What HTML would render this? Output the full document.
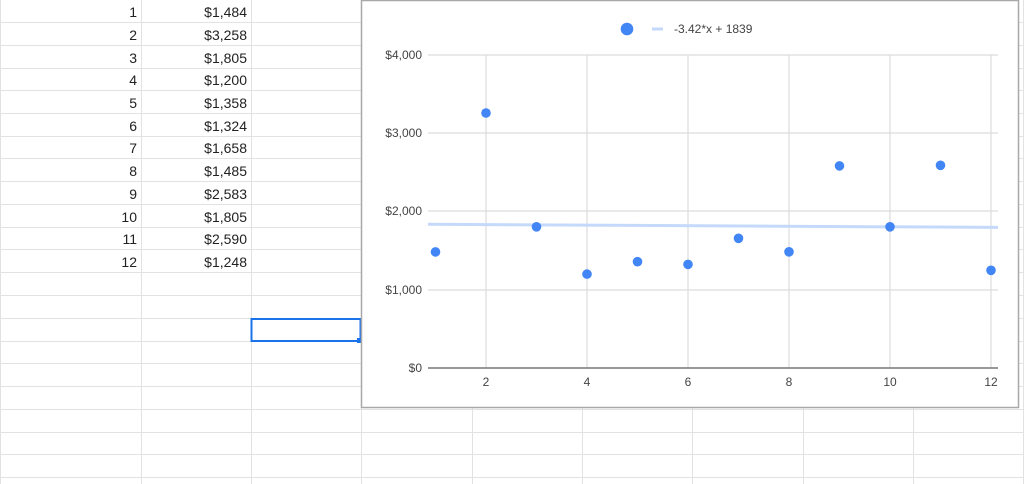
<!DOCTYPE html>
<html><head><meta charset="utf-8"><style>
html,body{margin:0;padding:0;background:#fff;width:1024px;height:484px;overflow:hidden}
svg{display:block}
text{font-family:"Liberation Sans",Arial,sans-serif}
</style></head><body>
<svg width="1024" height="484" viewBox="0 0 1024 484" xmlns="http://www.w3.org/2000/svg">
<g stroke="#e2e2e2" stroke-width="1">
<line x1="0.5" y1="0" x2="0.5" y2="484"/>
<line x1="141.5" y1="0" x2="141.5" y2="484"/>
<line x1="251.5" y1="0" x2="251.5" y2="484"/>
<line x1="361.5" y1="0" x2="361.5" y2="484"/>
<line x1="472.5" y1="0" x2="472.5" y2="484"/>
<line x1="582.5" y1="0" x2="582.5" y2="484"/>
<line x1="692.5" y1="0" x2="692.5" y2="484"/>
<line x1="803.5" y1="0" x2="803.5" y2="484"/>
<line x1="913.5" y1="0" x2="913.5" y2="484"/>
<line x1="1023.5" y1="0" x2="1023.5" y2="484"/>
<line x1="0" y1="22.5" x2="1024" y2="22.5"/>
<line x1="0" y1="45.5" x2="1024" y2="45.5"/>
<line x1="0" y1="68.5" x2="1024" y2="68.5"/>
<line x1="0" y1="90.5" x2="1024" y2="90.5"/>
<line x1="0" y1="113.5" x2="1024" y2="113.5"/>
<line x1="0" y1="136.5" x2="1024" y2="136.5"/>
<line x1="0" y1="158.5" x2="1024" y2="158.5"/>
<line x1="0" y1="181.5" x2="1024" y2="181.5"/>
<line x1="0" y1="204.5" x2="1024" y2="204.5"/>
<line x1="0" y1="227.5" x2="1024" y2="227.5"/>
<line x1="0" y1="249.5" x2="1024" y2="249.5"/>
<line x1="0" y1="272.5" x2="1024" y2="272.5"/>
<line x1="0" y1="295.5" x2="1024" y2="295.5"/>
<line x1="0" y1="318.5" x2="1024" y2="318.5"/>
<line x1="0" y1="341.5" x2="1024" y2="341.5"/>
<line x1="0" y1="363.5" x2="1024" y2="363.5"/>
<line x1="0" y1="386.5" x2="1024" y2="386.5"/>
<line x1="0" y1="409.5" x2="1024" y2="409.5"/>
<line x1="0" y1="432.5" x2="1024" y2="432.5"/>
<line x1="0" y1="454.5" x2="1024" y2="454.5"/>
<line x1="0" y1="477.5" x2="1024" y2="477.5"/>
</g>
<g font-size="14" fill="#222" text-anchor="end">
<text x="137" y="17">1</text><text x="247" y="17">$1,484</text>
<text x="137" y="40">2</text><text x="247" y="40">$3,258</text>
<text x="137" y="63">3</text><text x="247" y="63">$1,805</text>
<text x="137" y="85">4</text><text x="247" y="85">$1,200</text>
<text x="137" y="108">5</text><text x="247" y="108">$1,358</text>
<text x="137" y="131">6</text><text x="247" y="131">$1,324</text>
<text x="137" y="153">7</text><text x="247" y="153">$1,658</text>
<text x="137" y="176">8</text><text x="247" y="176">$1,485</text>
<text x="137" y="199">9</text><text x="247" y="199">$2,583</text>
<text x="137" y="222">10</text><text x="247" y="222">$1,805</text>
<text x="137" y="244">11</text><text x="247" y="244">$2,590</text>
<text x="137" y="267">12</text><text x="247" y="267">$1,248</text>
</g>
<rect x="251.5" y="319" width="109" height="22" fill="none" stroke="#1a73e8" stroke-width="2"/>
<rect x="357" y="338" width="5" height="5" fill="#1a73e8"/>
<!-- chart -->
<rect x="361.5" y="0.5" width="657" height="407" fill="#fff" stroke="#a8a8a8" stroke-width="1.5"/>
<g stroke="#dcdcdc" stroke-width="1.2">
<line x1="428" y1="55" x2="998" y2="55"/>
<line x1="428" y1="133" x2="998" y2="133"/>
<line x1="428" y1="211" x2="998" y2="211"/>
<line x1="428" y1="290" x2="998" y2="290"/>
<line x1="486" y1="55" x2="486" y2="368"/>
<line x1="587" y1="55" x2="587" y2="368"/>
<line x1="688" y1="55" x2="688" y2="368"/>
<line x1="789" y1="55" x2="789" y2="368"/>
<line x1="890" y1="55" x2="890" y2="368"/>
<line x1="991" y1="55" x2="991" y2="368"/>
</g>
<line x1="428" y1="368" x2="998" y2="368" stroke="#777" stroke-width="1.5"/>
<g font-size="12" fill="#444" text-anchor="end">
<text x="422" y="59">$4,000</text>
<text x="422" y="137">$3,000</text>
<text x="422" y="215">$2,000</text>
<text x="422" y="294">$1,000</text>
<text x="422" y="372">$0</text>
</g>
<g font-size="12" fill="#444" text-anchor="middle">
<text x="486" y="386">2</text><text x="587" y="386">4</text><text x="688" y="386">6</text>
<text x="789" y="386">8</text><text x="890" y="386">10</text><text x="991" y="386">12</text>
</g>
<line x1="428" y1="224.3" x2="998" y2="227.4" stroke="#c5d9fb" stroke-width="3"/>
<g fill="#4285f4">
<circle cx="435.5" cy="251.9" r="4.8"/>
<circle cx="486" cy="113" r="4.8"/>
<circle cx="536.5" cy="226.8" r="4.8"/>
<circle cx="587" cy="274.1" r="4.8"/>
<circle cx="637.5" cy="261.7" r="4.8"/>
<circle cx="688" cy="264.4" r="4.8"/>
<circle cx="738.5" cy="238.3" r="4.8"/>
<circle cx="789" cy="251.8" r="4.8"/>
<circle cx="839.5" cy="165.9" r="4.8"/>
<circle cx="890" cy="226.8" r="4.8"/>
<circle cx="940.5" cy="165.3" r="4.8"/>
<circle cx="991" cy="270.3" r="4.8"/>
<circle cx="627" cy="29" r="6.3"/>
</g>
<rect x="652" y="27.5" width="11" height="3" fill="#c5d9fb"/>
<text x="674" y="33" font-size="12" fill="#444">-3.42*x + 1839</text>
</svg>
</body></html>
